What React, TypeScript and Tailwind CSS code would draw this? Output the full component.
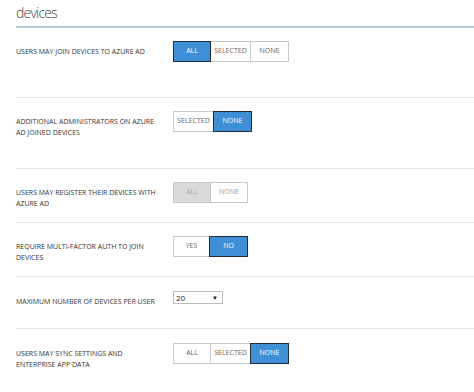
import React from "react";

type Opt = { label: string; w: number };

const LABEL = "text-[7px] leading-[11px] text-[#333] uppercase";

function Toggle({
  options,
  active,
  disabled = false,
}: {
  options: Opt[];
  active: number;
  disabled?: boolean;
}) {
  return (
    <div className="flex h-[21px]">
      {options.map((o, i) => {
        const on = i === active;
        let cls = "bg-white border-[#c9c9c9] text-[#666]";
        if (on && !disabled) cls = "bg-[#3f8fd7] border-[#1f2d3a] text-white z-10";
        if (on && disabled) cls = "bg-[#d9d9d9] border-[#c9c9c9] text-[#a9a9a9]";
        if (!on && disabled) cls = "bg-white border-[#c9c9c9] text-[#9a9a9a]";
        return (
          <div
            key={o.label}
            style={{ width: o.w }}
            className={`relative -ml-px first:ml-0 flex items-center justify-center border text-[7px] ${cls}`}
          >
            {o.label}
          </div>
        );
      })}
    </div>
  );
}

function Row({
  label,
  height,
  children,
}: {
  label: React.ReactNode;
  height: number;
  children: React.ReactNode;
}) {
  return (
    <div style={{ height }} className="flex items-start pt-[13px] border-b border-[#e6e6e6]">
      <div className={`${LABEL} w-[157px] pt-[5px]`}>{label}</div>
      {children}
    </div>
  );
}

export default function App() {
  return (
    <div
      className="w-[474px] h-[392px] overflow-hidden bg-white pl-[16px]"
      style={{ fontFamily: '"Open Sans", "Noto Sans", sans-serif' }}
    >
      <div className="h-[28px] border-b-2 border-[#b9cfe0] pt-[3px]">
        <div className="text-[14px] leading-[20px] font-light tracking-[-0.8px] text-[#444]">devices</div>
      </div>

      <Row label="Users may join devices to Azure AD" height={70}>
        <Toggle
          active={0}
          options={[
            { label: "ALL", w: 38 },
            { label: "SELECTED", w: 41 },
            { label: "NONE", w: 39 },
          ]}
        />
      </Row>

      <Row
        height={71}
        label={
          <>
            Additional administrators on Azure
            <br />
            AD joined devices
          </>
        }
      >
        <Toggle
          active={1}
          options={[
            { label: "SELECTED", w: 41 },
            { label: "NONE", w: 39 },
          ]}
        />
      </Row>

      <Row
        height={54}
        label={
          <>
            Users may register their devices with
            <br />
            Azure AD
          </>
        }
      >
        <Toggle
          active={0}
          disabled
          options={[
            { label: "ALL", w: 38 },
            { label: "NONE", w: 38 },
          ]}
        />
      </Row>

      <Row
        height={54}
        label={
          <>
            Require multi-factor auth to join
            <br />
            devices
          </>
        }
      >
        <Toggle
          active={1}
          options={[
            { label: "YES", w: 37 },
            { label: "NO", w: 39 },
          ]}
        />
      </Row>

      <div className="h-[52px] flex items-start pt-[14px] border-b border-[#e6e6e6]">
        <div className={`${LABEL} w-[157px] pt-[5px]`}>Maximum number of devices per user</div>
        <div className="w-[50px] h-[13px] border border-[#bdbdbd] bg-white flex items-center justify-between pl-[2px] pr-[4px]">
          <span className="text-[8px] leading-none text-[#222]">20</span>
          <span className="text-[6px] leading-none text-[#111]">▼</span>
        </div>
      </div>

      <div className="flex items-start pt-[14px]">
        <div className={`${LABEL} w-[157px] pt-[5px]`}>
          Users may sync settings and
          <br />
          enterprise app data
        </div>
        <Toggle
          active={2}
          options={[
            { label: "ALL", w: 38 },
            { label: "SELECTED", w: 41 },
            { label: "NONE", w: 39 },
          ]}
        />
      </div>
    </div>
  );
}
